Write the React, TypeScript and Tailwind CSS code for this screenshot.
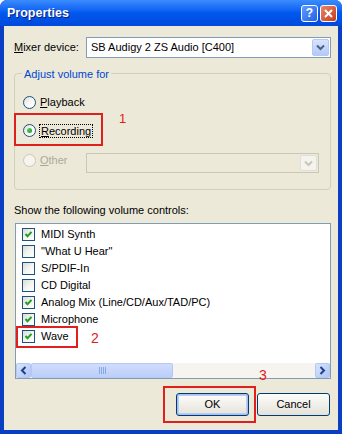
import React from 'react';

const FONT = { fontFamily: '"Liberation Sans", Arial, sans-serif' };

const ComboArrow: React.FC<{ disabled?: boolean }> = ({ disabled }) => (
  <div
    className={`w-[17px] h-full flex items-center justify-center rounded-[2px] border ${
      disabled
        ? 'border-[#e2e0d6] bg-[#f4f3ee]'
        : 'border-[#b3c8f5] bg-gradient-to-b from-[#d8e4fe] to-[#b4c9f6]'
    }`}
  >
    <svg width="9" height="7" viewBox="0 0 9 7">
      <path
        d="M1 1.5 L4.5 5 L8 1.5"
        fill="none"
        stroke={disabled ? '#c9c7ba' : '#4d6185'}
        strokeWidth="2"
      />
    </svg>
  </div>
);

const Radio: React.FC<{ checked?: boolean; disabled?: boolean }> = ({ checked, disabled }) => (
  <div
    className={`w-[13px] h-[13px] rounded-full border flex items-center justify-center ${
      disabled
        ? 'border-[#cac8bb] bg-[#f5f4ef]'
        : 'border-[#1c5180] bg-gradient-to-br from-[#dcdbd3] via-[#f8f8f6] to-white'
    }`}
  >
    {checked && (
      <div className="w-[5px] h-[5px] rounded-full bg-gradient-to-br from-[#5fd35f] to-[#1f9a1f]" />
    )}
  </div>
);

const Checkbox: React.FC<{ checked?: boolean }> = ({ checked }) => (
  <div className="w-[13px] h-[13px] border border-[#1c5180] bg-gradient-to-br from-[#dcdbd3] via-[#f4f4f0] to-white flex items-center justify-center">
    {checked && (
      <svg width="9" height="9" viewBox="0 0 9 9">
        <path d="M1.5 4 L3.5 6.2 L7.5 1.8" fill="none" stroke="#21a121" strokeWidth="2" />
      </svg>
    )}
  </div>
);

const ScrollArrow: React.FC<{ dir: 'left' | 'right' }> = ({ dir }) => (
  <div className="w-[15px] h-full rounded-[2px] border border-[#b3c8f5] bg-gradient-to-br from-[#d8e4fe] to-[#b1c6f5] flex items-center justify-center">
    <svg width="7" height="9" viewBox="0 0 7 9">
      <path
        d={dir === 'left' ? 'M5.5 1 L2 4.5 L5.5 8' : 'M1.5 1 L5 4.5 L1.5 8'}
        fill="none"
        stroke="#1d3f8c"
        strokeWidth="2"
      />
    </svg>
  </div>
);

const items: { label: string; checked: boolean }[] = [
  { label: 'MIDI Synth', checked: true },
  { label: '"What U Hear"', checked: false },
  { label: 'S/PDIF-In', checked: false },
  { label: 'CD Digital', checked: false },
  { label: 'Analog Mix (Line/CD/Aux/TAD/PC)', checked: true },
  { label: 'Microphone', checked: true },
  { label: 'Wave', checked: true },
];

export default function App() {
  return (
    <div
      className="relative w-[342px] h-[434px] flex flex-col bg-[#0a3fc4] rounded-t-[7px] overflow-hidden text-[11px] text-black"
      style={FONT}
    >
      {/* Title bar */}
      <div className="h-[26px] flex items-center pl-[7px] pr-[5px] bg-gradient-to-b from-[#3b8cff] via-[#0058ee] to-[#0049dc]">
        <span className="text-white font-bold text-[12.5px] [text-shadow:1px_1px_0_#0a1e80]">
          Properties
        </span>
        <div className="ml-auto flex gap-[2px]">
          <div className="w-[17px] h-[17px] rounded-[3px] border border-white bg-gradient-to-br from-[#5f9bff] to-[#2460e8] flex items-center justify-center text-white font-bold text-[12px]">
            ?
          </div>
          <div className="w-[17px] h-[17px] rounded-[3px] border border-white bg-gradient-to-br from-[#e8856a] to-[#c73a14] flex items-center justify-center">
            <svg width="9" height="9" viewBox="0 0 9 9">
              <path d="M1 1 L8 8 M8 1 L1 8" stroke="white" strokeWidth="2" />
            </svg>
          </div>
        </div>
      </div>

      {/* Client area */}
      <div className="flex-1 mx-[4px] mb-[4px] bg-[#ece9d8] flex flex-col pl-[10px] pr-[7px]">
        {/* Mixer device */}
        <div className="mt-[11px] h-[21px] flex items-center">
          <span className="w-[72px]">
            <span className="underline">M</span>ixer device:
          </span>
          <div className="w-[245px] h-[21px] border border-[#7f9db9] bg-white flex items-center p-[1px]">
            <span className="flex-1 pl-[3px]">SB Audigy 2 ZS Audio [C400]</span>
            <ComboArrow />
          </div>
        </div>

        {/* Group box */}
        <div className="relative mt-[15px] h-[117px] w-[317px] border border-[#d0d0bf] rounded-[4px] flex flex-col pl-[8px] pr-[11px]">
          <span className="absolute left-[7px] top-[-8px] px-[2px] bg-[#ece9d8] text-[#0046d5]">
            Adjust volume for
          </span>
          <div className="mt-[22px] h-[13px] flex items-center gap-[4px]">
            <Radio />
            <span>
              <span className="underline">P</span>layback
            </span>
          </div>
          <div className="mt-[15px] h-[13px] flex items-center gap-[3px]">
            <Radio checked />
            <span className="border border-dotted border-black px-[1px] leading-[12px]">
              <span className="underline">R</span>ecording
            </span>
          </div>
          <div className="mt-[16px] h-[20px] flex items-start">
            <div className="mt-[1px] h-[13px] flex items-center gap-[4px] text-[#aca899]">
              <Radio disabled />
              <span>
                <span className="underline">O</span>ther
              </span>
            </div>
            <div className="ml-auto w-[233px] h-[20px] border border-[#c9c7ba] bg-[#ece9d8] flex justify-end p-[1px]">
              <ComboArrow disabled />
            </div>
          </div>
        </div>

        <div className="mt-[14px] h-[13px] leading-[13px]">Show the following volume controls:</div>

        {/* List */}
        <div className="mt-[6px] ml-[1px] w-[316px] h-[156px] border border-[#7f9db9] bg-white flex flex-col">
          <div className="flex-1 pt-[2px] pl-[6px]">
            {items.map((it) => (
              <div key={it.label} className="h-[17px] flex items-center gap-[6px]">
                <Checkbox checked={it.checked} />
                <span>{it.label}</span>
              </div>
            ))}
          </div>
          <div className="h-[15px] flex bg-[#f5f4ef]">
            <ScrollArrow dir="left" />
            <div className="w-[142px] h-full rounded-[2px] border border-[#b3c8f5] bg-gradient-to-b from-[#cfdcfd] to-[#bccff8] flex items-center justify-center gap-[1px]">
              {[0, 1, 2, 3].map((i) => (
                <div key={i} className="w-[1px] h-[7px] bg-[#8aa6e6]" />
              ))}
            </div>
            <div className="flex-1" />
            <ScrollArrow dir="right" />
          </div>
        </div>

        {/* Buttons */}
        <div className="mt-[14px] flex justify-end gap-[8px] pr-[1px]">
          <button className="w-[73px] h-[23px] rounded-[3px] border border-[#003c74] bg-gradient-to-b from-[#fdfdfb] to-[#e4e2d8] shadow-[inset_0_0_0_1px_#a8bdf0,inset_0_0_0_2px_#bccdf4]">
            OK
          </button>
          <button className="w-[73px] h-[23px] rounded-[3px] border border-[#003c74] bg-gradient-to-b from-[#fdfdfb] to-[#e4e2d8]">
            Cancel
          </button>
        </div>
      </div>

      {/* Red annotations */}
      <div className="absolute left-[14px] top-[113px] w-[89px] h-[33px] border-2 border-[#e0201c]" />
      <span className="absolute left-[119px] top-[109px] text-[13px] text-[#e0201c]">1</span>
      <div className="absolute left-[16px] top-[326px] w-[62px] h-[22px] border-2 border-[#e0201c]" />
      <span className="absolute left-[91px] top-[328px] text-[14px] text-[#e0201c]">2</span>
      <span className="absolute left-[259px] top-[365px] text-[14px] text-[#e0201c]">3</span>
      <div className="absolute left-[163px] top-[386px] w-[93px] h-[37px] border-2 border-[#e0201c]" />
    </div>
  );
}
